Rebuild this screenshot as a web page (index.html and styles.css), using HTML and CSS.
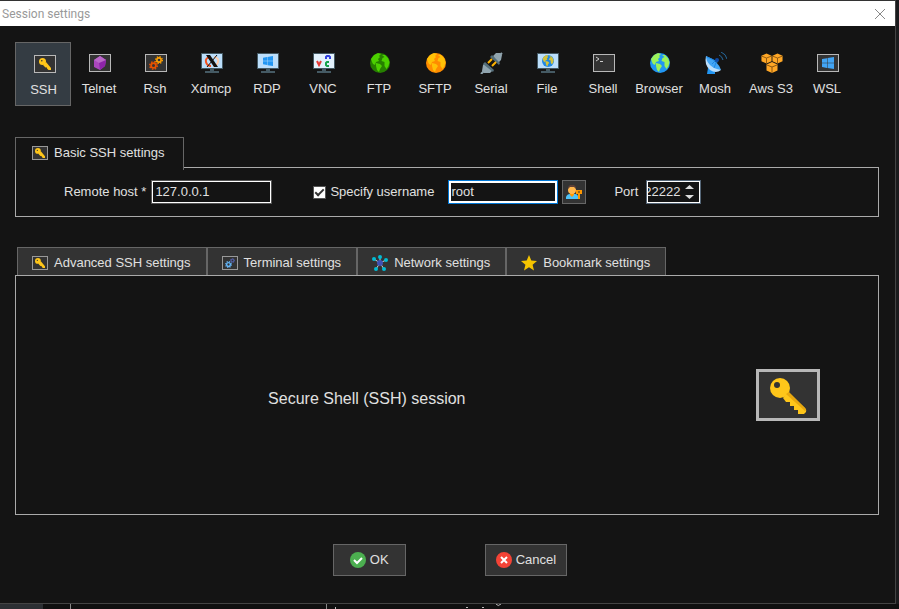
FILE: index.html
```html
<!DOCTYPE html>
<html lang="en">

<head>
    <meta charset="utf-8">
    <meta name="viewport" content="width=device-width, initial-scale=1">
    <title>Session settings</title>
    <link rel="stylesheet" href="styles.css">
</head>

<body>

    <!-- shared icon shapes -->
    <svg class="defs" width="0" height="0" aria-hidden="true">
        <symbol id="key" viewBox="0 0 64 52">
            <circle cx="24" cy="19" r="10" fill="#ffc61a" />
            <path d="M27 29l5-6 17 16q2 2 1 4l-2 2h-6v-4h-4v-4h-4v-4h-4z" fill="#ffc61a" />
            <path d="M33 23l16 16q2 2 0 3L30 25z" fill="#e8a80f" />
            <circle cx="21" cy="16" r="3" fill="#333" />
        </symbol>
        <symbol id="bigkey" viewBox="0 0 12 12">
            <circle cx="3.500" cy="3.500" r="3.500" fill="#ffc61a" />
            <path d="M4 7l3-3 5 6v2h-2.500L8 10.500V9.500H6.500z" fill="#ffc61a" />
            <circle cx="2.800" cy="2.800" r=".8" fill="#333" />
        </symbol>
        <symbol id="frame" viewBox="0 0 24 22">
            <rect x="2.500" y="2.500" width="21" height="17" fill="#333" stroke="#b8b8b8" />
        </symbol>
        <symbol id="smallframe" viewBox="0 0 16 14">
            <rect x=".5" y=".5" width="15" height="13" fill="#333" stroke="#999" />
        </symbol>
        <symbol id="monitor" viewBox="0 0 24 22">
            <path d="M2 1h22v16H2z" fill="#455a64" />
            <path d="M3 2h20v14H3z" fill="#bbdefb" />
            <path d="M11 17h4v2h-4zM6 19h14v2H6z" fill="#455a64" />
        </symbol>
        <symbol id="windows" viewBox="0 0 12 12">
            <path d="M0 2l5-.8v4.600H0zM5.500 1.100L12 0v5.800H5.500zM0 6.300h5v4.600L0 10zM5.500 6.300H12V12l-6.500-1z" />
        </symbol>
        <symbol id="land" viewBox="0 0 20 20">
            <path d="M1 6l3-4 4-2 3 1-2 2 1 1-2 2 1 2-3 1-1 3-2-1-1-2zM6 10l4 1 2 2-2 3-1 3-2-2-1-4zM12 2l3 0 3 3 1.500 4-1 4-2 3-2-3V9l-3-1 1-3 2-1z" />
        </symbol>
        <symbol id="gear" viewBox="0 0 12 12">
            <circle cx="6" cy="6" r="3.200" fill="none" stroke="currentColor" stroke-width="2.400" />
            <circle cx="6" cy="6" r="5" fill="none" stroke="currentColor" stroke-width="2" stroke-dasharray="2 1.930" />
        </symbol>
        <symbol id="cube" viewBox="0 0 12 11">
            <path d="M6 0l5.500 2.500V8.500L6 11 .5 8.500V2.500z" fill="#ffa726" />
            <path d="M1 3l5 2 5-2M6 5v6" fill="none" stroke="#8a5510" />
        </symbol>
    </svg>

    <div class="dialog">
        <div class="titlebar">
            <span>Session settings</span>
            <button class="close" aria-label="Close">
                <svg width="12" height="12" viewBox="0 0 12 12"><path d="M1 1l10 10M11 1L1 11" fill="none" stroke="#888" /></svg>
            </button>
        </div>

        <div class="content">

            <div class="sessions">
                <button class="session active">
                    <svg viewBox="0 0 24 22"><use href="#frame" /><use href="#bigkey" x="7" y="5" width="12" height="12" /></svg>
                    SSH
                </button>
                <button class="session">
                    <svg viewBox="0 0 24 22"><use href="#frame" />
                        <path d="M13 4l6 4-1 6-5 4-6-3V8z" fill="#ab47bc" />
                        <path d="M13 4l6 4-1 6-5 4-1-7z" fill="#8e24aa" />
                        <path d="M13 4l6 4-7 3-5-3z" fill="#ba68c8" />
                    </svg>
                    Telnet
                </button>
                <button class="session">
                    <svg viewBox="0 0 24 22"><use href="#frame" />
                        <use href="#gear" x="6" y="9" width="9" height="9" color="#e65100" />
                        <use href="#gear" x="12" y="4" width="8" height="8" color="#ffa000" />
                    </svg>
                    Rsh
                </button>
                <button class="session">
                    <svg viewBox="0 0 24 22"><use href="#monitor" />
                        <path d="M11 5q-5 1-4 5t5 4" fill="none" stroke="#f4511e" stroke-width="2" />
                        <path d="M15 5q5 1 4 5t-5 4" fill="none" stroke="#ffccaa" stroke-width="2" />
                        <path d="M7 3h4l8 12h-4z" fill="#111" />
                        <path d="M18 3L8 15" stroke="#111" />
                    </svg>
                    Xdmcp
                </button>
                <button class="session">
                    <svg viewBox="0 0 24 22"><use href="#monitor" /><use href="#windows" x="8" y="4" width="10" height="10" fill="#2196f3" /></svg>
                    RDP
                </button>
                <button class="session">
                    <svg viewBox="0 0 24 22"><use href="#monitor" />
                        <path d="M3 2h20v14H3z" fill="#e3f2fd" />
                        <path d="M6 9l2 4 2-4" fill="none" stroke="#e53935" stroke-width="2" />
                        <path d="M15 7V5l1-1h2l1 1v2" fill="none" stroke="#303fdd" stroke-width="2" />
                        <path d="M18 10h-2l-1 1v2l1 1h2" fill="none" stroke="#16a34a" stroke-width="2" />
                    </svg>
                    VNC
                </button>
                <button class="session">
                    <svg viewBox="0 0 24 22"><circle cx="13" cy="11" r="10" fill="#267f00" /><use href="#land" x="3" y="1" width="20" height="20" fill="#4cd000" /></svg>
                    FTP
                </button>
                <button class="session">
                    <svg viewBox="0 0 24 22"><circle cx="13" cy="11" r="10" fill="#ff8c00" /><use href="#land" x="3" y="1" width="20" height="20" fill="#ffc107" /></svg>
                    SFTP
                </button>
                <button class="session">
                    <svg viewBox="0 0 24 22">
                        <path d="M2 22l4-4M20 4l3-3" stroke="#90a4ae" stroke-width="2" />
                        <path d="M4 13l2-2 8 7-3 3H5l-2-2zM14 4l3-3h4l2 2-1 5-3 3z" fill="#90a4ae" />
                        <path d="M6 10l9 8-1 2L4 12zM13 3l8 8-1 2-9-8z" fill="#546e7a" />
                        <path d="M9 11l4-4M13 14l4-4" stroke="#ffb300" stroke-width="2" />
                    </svg>
                    Serial
                </button>
                <button class="session">
                    <svg viewBox="0 0 24 22"><use href="#monitor" /><circle cx="13" cy="9" r="6" fill="#1e88e5" /><use href="#land" x="7" y="3" width="12" height="12" fill="#d4c23a" /></svg>
                    File
                </button>
                <button class="session">
                    <svg viewBox="0 0 24 22"><use href="#frame" /><path d="M5 5l3 2-3 2M9 9.500h3" fill="none" stroke="#ccc" /></svg>
                    Shell
                </button>
                <button class="session">
                    <svg viewBox="0 0 24 22"><circle cx="13" cy="11" r="10" fill="#2196f3" /><use href="#land" x="3" y="1" width="20" height="20" fill="#9cf25a" /></svg>
                    Browser
                </button>
                <button class="session">
                    <svg viewBox="0 0 24 22">
                        <path d="M5 16h4l3 4v2H4z" fill="#2196f3" />
                        <path d="M3 4l15 14q-5 4-11 0Q1 13 3 4z" fill="#bbdefb" />
                        <path d="M3 4Q9 6 13 10t5 8Q11 17 7 13T3 4z" fill="#42a5f5" />
                        <path d="M9 12l5-5M4 5l11 5M11 16l3-8" stroke="#1e88e5" />
                        <circle cx="14" cy="8" r="2" fill="#0d47a1" />
                        <path d="M16 3q3 1 4 5M18 0q5 2 6 7" fill="none" stroke="#266a9e" />
                    </svg>
                    Mosh
                </button>
                <button class="session">
                    <svg viewBox="0 0 24 22">
                        <use href="#cube" x="2" y="1" width="11" height="11" />
                        <use href="#cube" x="13" y="1" width="11" height="11" />
                        <use href="#cube" x="7" y="10" width="12" height="11" />
                    </svg>
                    Aws S3
                </button>
                <button class="session">
                    <svg viewBox="0 0 24 22"><use href="#frame" /><use href="#windows" x="7" y="5" width="12" height="12" fill="#42a5f5" /></svg>
                    WSL
                </button>
            </div>

            <div class="basic">
                <div class="basic-tab">
                    <svg class="tab-icon" viewBox="0 0 16 14"><use href="#smallframe" /><use href="#bigkey" x="3" y="2" width="10" height="10" /></svg>
                    Basic SSH settings
                </div>
                <div class="basic-panel">
                    <label for="host">Remote host *</label>
                    <input class="field host" id="host" type="text" value="127.0.0.1">
                    <input class="check" id="specify" type="checkbox" checked>
                    <label for="specify">Specify username</label>
                    <input class="field user" type="text" value="root" aria-label="Username">
                    <button class="user-button" aria-label="Choose user">
                        <svg width="16" height="16" viewBox="0 0 16 16">
                            <path d="M0 15v-2q1-3 4-3h5q3 0 3 3v2z" fill="#4fc3f7" />
                            <path d="M4 9h4v2l-2 2-2-2z" fill="#ff9800" />
                            <circle cx="6" cy="6" r="4" fill="#ffb74d" />
                            <path d="M2 5V3l2-2h4l2 2v2L8 3H4z" fill="#5d4037" />
                            <path d="M10 6h6v4h-2v5h-2v-5h-2z" fill="#ff9800" />
                            <path d="M12 8h2" stroke="#333" />
                        </svg>
                    </button>
                    <label class="port-label" for="port">Port</label>
                    <div class="spin">
                        <input id="port" type="number" value="22222">
                        <svg width="9" height="14" viewBox="0 0 9 14"><path d="M0 4l4.500-4L9 4zM0 10h9l-4.500 4z" fill="#ddd" /></svg>
                    </div>
                </div>
            </div>

            <div class="tabs">
                <button class="tab">
                    <svg class="tab-icon" viewBox="0 0 16 14"><use href="#smallframe" /><use href="#bigkey" x="3" y="2" width="10" height="10" /></svg>
                    Advanced SSH settings
                </button>
                <button class="tab">
                    <svg class="tab-icon" viewBox="0 0 16 14"><use href="#smallframe" />
                        <use href="#gear" x="3" y="5" width="7" height="7" color="#64b5f6" />
                        <use href="#gear" x="8" y="2" width="5" height="5" color="#5c6bc0" />
                    </svg>
                    Terminal settings
                </button>
                <button class="tab">
                    <svg class="tab-icon tall" viewBox="0 0 16 16">
                        <path d="M8 8V2M8 8l6-3M8 8l4 6M8 8l-4 6M8 8L2 4" stroke="#cfd8dc" />
                        <g fill="#00bcd4"><circle cx="8" cy="2" r="2" /><circle cx="14" cy="5" r="2" /><circle cx="12" cy="14" r="2" /><circle cx="4" cy="14" r="2" /><circle cx="2" cy="4" r="2" /></g>
                        <circle cx="8" cy="8" r="3" fill="#3f51b5" />
                    </svg>
                    Network settings
                </button>
                <button class="tab">
                    <svg class="tab-icon tall" viewBox="0 0 16 16"><path d="M8 0l2.300 5.500 5.700.4-4.400 3.900L13 15.500l-5-3.200-5 3.200 1.400-5.700L0 5.900l5.700-.4z" fill="#f5c400" /></svg>
                    Bookmark settings
                </button>
            </div>
            <div class="panel">
                <div class="panel-title">Secure Shell (SSH) session</div>
                <div class="panel-icon"><svg width="64" height="52" viewBox="0 0 64 52">
                    <path d="M1.500 1.500h61v49h-61z" fill="#333" stroke="#b8b8b8" stroke-width="3" />
                    <use href="#key" width="64" height="52" />
                </svg></div>
            </div>

            <div class="actions">
                <button class="action ok">
                    <svg width="16" height="16" viewBox="0 0 16 16"><circle cx="8" cy="8" r="8" fill="#4caf50" /><path d="M4 8l3 3 5-5" fill="none" stroke="#fff" stroke-width="2" /></svg>
                    OK
                </button>
                <button class="action">
                    <svg width="16" height="16" viewBox="0 0 16 16"><circle cx="8" cy="8" r="8" fill="#f44336" /><path d="M5 5l6 6M11 5l-6 6" fill="none" stroke="#fff" stroke-width="2" /></svg>
                    Cancel
                </button>
            </div>
        </div>
    </div>

    <!-- sliver of the window behind -->
    <div class="behind">
        <div class="behind-left"></div>
        <div class="behind-mid"></div>
        <div class="behind-right">
            <svg width="180" height="5" viewBox="0 0 180 5"><path d="M8 3h1v2h-1zM139 3h2v1h-2zM155 3h2v1h-2z" fill="#bbb" /><path d="M169 0q2 3 5 0" fill="none" stroke="#bbb" /></svg>
        </div>
    </div>

</body>

</html>
```

FILE: styles.css
```css
* {
    box-sizing: border-box;
}

body {
    margin: 0;
    min-height: 100vh;
    display: flex;
    flex-direction: column;
    background: #1b1b1d;
    color: #e0e0e0;
    font-family: "Liberation Sans", Arial, sans-serif;
    font-size: 13px;
    line-height: 16px;
}

button,
input {
    font: inherit;
    color: inherit;
    margin: 0;
}

.defs {
    position: absolute;
}

.dialog {
    flex: 1;
    display: flex;
    flex-direction: column;
    margin-right: 3px;
    background: #141414;
    border-top: 1px solid #333;
    border-right: 1px solid #444;
    border-bottom: 1px solid #444;
}

.titlebar {
    display: flex;
    justify-content: space-between;
    align-items: center;
    height: 25px;
    padding: 0 9px 0 2px;
    background: #fff;
    color: #999;
    font-family: Roboto, sans-serif;
    font-size: 12px;
}

.close {
    display: flex;
    padding: 0;
    border: 0;
    background: none;
}

.content {
    flex: 1;
    display: flex;
    flex-direction: column;
    padding: 16px 16px 27px 15px;
}

/* session types */
.sessions {
    display: flex;
}

.session {
    display: flex;
    flex-direction: column;
    align-items: center;
    gap: 7px;
    width: 56px;
    height: 64px;
    padding: 10px 0 0;
    border: 0;
    background: none;
    white-space: nowrap;
}

.session svg {
    width: 24px;
    height: 22px;
}

.session.active {
    padding: 10px 0 0 1px;
    border: 1px solid #666;
    background: #343c43;
}

/* basic settings */
.basic {
    margin-top: 31px;
}

.basic-tab {
    position: relative;
    display: flex;
    align-items: center;
    gap: 6px;
    width: max-content;
    height: 33px;
    margin-bottom: -3px;
    padding: 0 18px 2px 16px;
    background: #141414;
    border: 1px solid #666;
    border-bottom: 0;
}

.basic-panel {
    display: flex;
    align-items: center;
    height: 50px;
    padding-left: 48px;
    border: 1px solid #aaa;
}

.tab-icon {
    width: 16px;
    height: 14px;
}

.tab-icon.tall {
    height: 16px;
}

.field {
    height: 24px;
    padding: 0 2px 2px;
    background: #141414;
    border: 2px solid #fff;
    outline: 1px solid #555;
    outline-offset: -1px;
}

.host {
    width: 121px;
    margin: 0 41px 0 5px;
}

.user {
    width: 110px;
    margin: 0 4px 0 14px;
    padding: 0 0 2px;
    border-width: 3px;
    outline-color: #0078d7;
}

.check {
    appearance: none;
    width: 13px;
    height: 13px;
    margin-right: 4px;
    background: #fff;
    border: 1px solid #555;
}

.check:checked::before {
    content: "";
    display: block;
    box-sizing: border-box;
    width: 9px;
    height: 5px;
    margin: 2px 0 0 1px;
    border: solid #333;
    border-width: 0 0 2px 2px;
    transform: rotate(-45deg);
}

.user-button {
    display: flex;
    align-items: center;
    justify-content: center;
    width: 24px;
    height: 24px;
    padding: 0;
    background: #333;
    border: 1px solid #666;
}

.port-label {
    margin: 0 8px 0 28px;
}

.spin {
    display: flex;
    align-items: center;
    width: 55px;
    height: 24px;
    padding-right: 5px;
    border: 2px solid #fff;
    outline: 1px solid #567;
    outline-offset: -1px;
}

.spin input {
    appearance: textfield;
    flex: 1;
    width: 0;
    margin-right: 4px;
    padding: 0;
    border: 0;
    background: none;
    text-indent: -4px;
}

.spin input::-webkit-inner-spin-button {
    display: none;
}

/* advanced settings */
.tabs {
    display: flex;
    margin: 30px 0 0 2px;
}

.tab {
    display: flex;
    align-items: center;
    gap: 6px;
    height: 28px;
    padding: 2px 15px 0 14px;
    background: #333;
    border: 1px solid #666;
    border-bottom: 0;
}

.panel {
    flex: 1;
    display: grid;
    grid-template-columns: 4fr 1fr;
    align-items: center;
    min-height: 120px;
    border: 1px solid #aaa;
}

.panel-title {
    padding: 8px 0 0 12px;
    text-align: center;
    font-size: 16px;
    line-height: 20px;
}

.panel-icon {
    display: flex;
    justify-content: center;
    padding-right: 8px;
}

/* dialog buttons */
.actions {
    display: flex;
    justify-content: center;
    gap: 79px;
    padding: 29px 0 0 6px;
}

.action {
    display: flex;
    align-items: center;
    gap: 4px;
    height: 32px;
    padding: 0 10px;
    background: #333;
    border: 1px solid #666;
}

.ok {
    padding: 0 16px;
}

.behind {
    display: flex;
    height: 5px;
    background: #101010;
}

.behind-left {
    width: 43px;
    background: #2c2f33;
}

.behind-mid {
    width: 257px;
    margin-left: 27px;
    border: solid #888;
    border-width: 0 1px;
}

.behind-right {
    display: flex;
}
```
